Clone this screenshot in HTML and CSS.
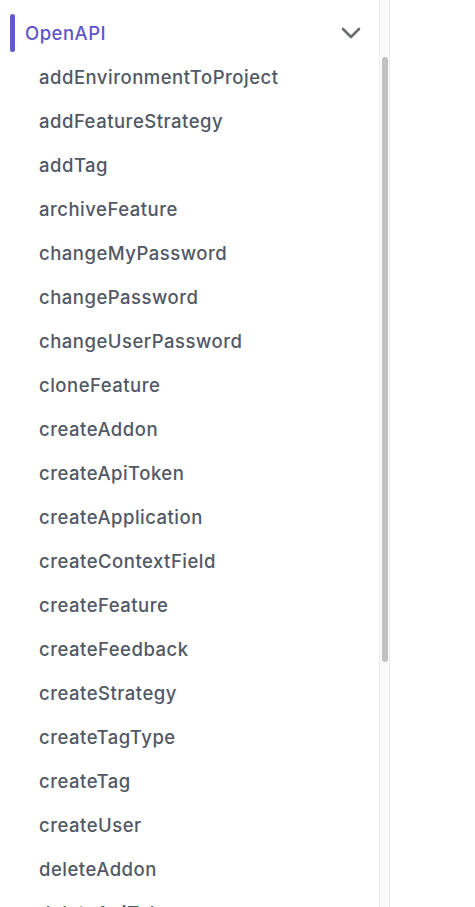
FILE: index.html
```html
<!DOCTYPE html>
<html>
<head>
<meta charset="utf-8">
<link rel="stylesheet" href="styles.css">
</head>
<body>
<div class="layout">
  <nav class="sidebar">
    <div class="menu">
      <div class="row prev">Deploying and managing</div>
      <div class="row category">
        <span class="cat-label">OpenAPI</span>
        <svg class="chevron" width="20" height="12" viewBox="0 0 20 12"><path d="M2 2 L10 10 L18 2" fill="none" stroke="#6a6d72" stroke-width="2.6" stroke-linecap="round" stroke-linejoin="round"/></svg>
      </div>
      <ul class="items">
        <li class="item">addEnvironmentToProject</li>
        <li class="item">addFeatureStrategy</li>
        <li class="item">addTag</li>
        <li class="item">archiveFeature</li>
        <li class="item">changeMyPassword</li>
        <li class="item">changePassword</li>
        <li class="item">changeUserPassword</li>
        <li class="item">cloneFeature</li>
        <li class="item">createAddon</li>
        <li class="item">createApiToken</li>
        <li class="item">createApplication</li>
        <li class="item">createContextField</li>
        <li class="item">createFeature</li>
        <li class="item">createFeedback</li>
        <li class="item">createStrategy</li>
        <li class="item">createTagType</li>
        <li class="item">createTag</li>
        <li class="item">createUser</li>
        <li class="item">deleteAddon</li>
        <li class="item">deleteApiToken</li>
      </ul>
    </div>
    <div class="track"><div class="thumb"></div></div>
  </nav>
  <main class="content"></main>
</div>
</body>
</html>
```
FILE: styles.css
```css
html, body {
  margin: 0;
  padding: 0;
  background: #ffffff;
  height: 100%;
  overflow: hidden;
}
body {
  font-family: Inter, "Noto Sans", sans-serif;
}
.layout {
  display: flex;
  height: 907px;
}
.sidebar {
  display: flex;
  width: 390px;
  flex: none;
}
.menu {
  width: 379px;
  overflow: hidden;
}
.row {
  height: 44px;
  display: flex;
  align-items: center;
  box-sizing: border-box;
}
.prev {
  margin-top: -33px;
  padding-left: 25px;
  font-size: 18.5px;
  font-weight: 500;
  letter-spacing: 0.5px;
  color: #525866;
}
.category {
  position: relative;
  padding-left: 25px;
  padding-right: 18px;
  justify-content: space-between;
}
.category::before {
  content: "";
  position: absolute;
  left: 10px;
  top: 3px;
  width: 5px;
  height: 38px;
  border-radius: 3px;
  background: #6259cc;
}
.cat-label {
  font-size: 18.5px;
  font-weight: 500;
  letter-spacing: 0.5px;
  color: #5f56c9;
}
.chevron {
  display: block;
}
.items {
  list-style: none;
  margin: 0;
  padding: 0;
}
.item {
  height: 44px;
  display: flex;
  align-items: center;
  padding-left: 39px;
  font-size: 18.5px;
  font-weight: 500;
  letter-spacing: 0.5px;
  color: #525866;
  white-space: nowrap;
}
.track {
  width: 9px;
  background: #fafafa;
  border-left: 1px solid #ececec;
  border-right: 1px solid #ececec;
  display: flex;
  justify-content: center;
}
.thumb {
  width: 6px;
  margin-top: 57px;
  height: 605px;
  border-radius: 3px;
  background: #c1c1c1;
}
.content {
  flex: 1;
  background: #ffffff;
}
```
